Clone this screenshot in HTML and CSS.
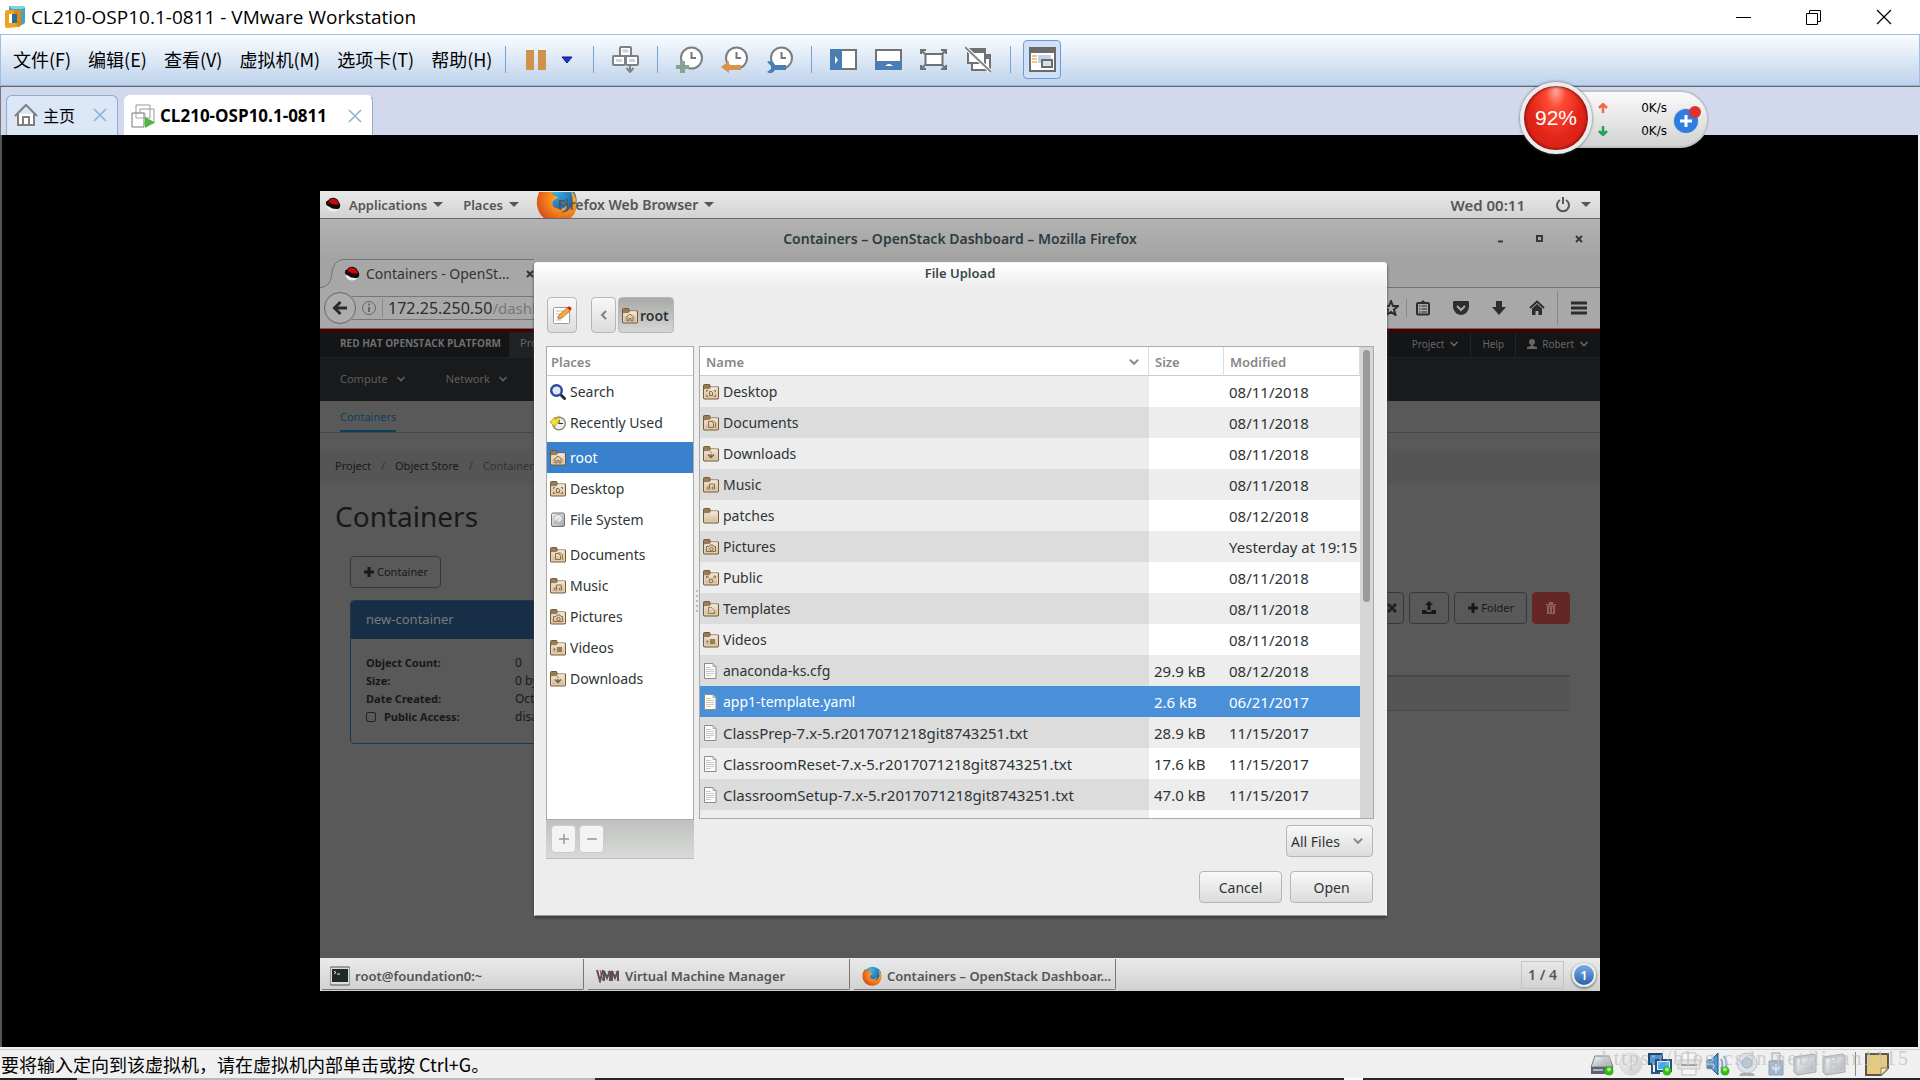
FILE: index.html
```html
<!DOCTYPE html>
<html lang="zh-CN">
<head>
<meta charset="utf-8">
<title>CL210-OSP10.1-0811 - VMware Workstation</title>
<link rel="stylesheet" href="styles.css">
</head>
<body>
<svg class="sprite" aria-hidden="true">
  <defs>
    <linearGradient id="gFold" x1="0" y1="0" x2="0" y2="1"><stop offset="0" stop-color="#f3e9dc"/><stop offset="1" stop-color="#d3b992"/></linearGradient>
    <linearGradient id="gSilver" x1="0" y1="0" x2="1" y2="1"><stop offset="0" stop-color="#f4f5f7"/><stop offset="1" stop-color="#9aa3ad"/></linearGradient>
    <radialGradient id="gFire" cx=".7" cy=".3" r=".9"><stop offset="0" stop-color="#ffce3a"/><stop offset=".5" stop-color="#f4801c"/><stop offset="1" stop-color="#c8321a"/></radialGradient>
    <radialGradient id="gGlobe" cx=".4" cy=".2" r=".9"><stop offset="0" stop-color="#3fb8ea"/><stop offset="1" stop-color="#123e82"/></radialGradient>
  </defs>
  <symbol id="folder" viewBox="0 0 16 16"><path d="M.5 14V1.500q0-1 1-1H6q1 0 1 1V3h8.500v11q0 1-1 1h-13q-1 0-1-1z" fill="#9a7b58" stroke="#745a35"/><path d="M1.500 14V5.500h5l1.500-2h6.500V14z" fill="url(#gFold)" stroke="#faf4ea" stroke-width=".6"/></symbol>
  <symbol id="f-home" viewBox="0 0 16 16"><use href="#folder"/><path d="M3.500 10 8 6l4.500 4M5 9.500V13h2v-2.500h2V13h2V9.500" fill="none" stroke="#8d6d45"/></symbol>
  <symbol id="f-desk" viewBox="0 0 16 16"><use href="#folder"/><path d="M3.500 8V6.500H5M3.500 11v1.500H5M11 6.500h1.500V8M12.500 11v1.500H11M6.500 7.500h2l1 1v3h-3z" fill="none" stroke="#8d6d45"/></symbol>
  <symbol id="f-docs" viewBox="0 0 16 16"><use href="#folder"/><path d="M5.500 6.500h3l2 2v4h-5zM8 6h2.500l2 2v4.500" fill="none" stroke="#8d6d45"/></symbol>
  <symbol id="f-down" viewBox="0 0 16 16"><use href="#folder"/><path d="M8 5.500v1M8 8v3M5 8.500l3 3 3-3" fill="none" stroke="#7d5c35" stroke-width="1.400"/></symbol>
  <symbol id="f-music" viewBox="0 0 16 16"><use href="#folder"/><path d="M6.500 11V7h5v4" fill="none" stroke="#8d6d45"/><circle cx="5.500" cy="11" r="1.300" fill="none" stroke="#8d6d45"/><circle cx="10.500" cy="11" r="1.300" fill="none" stroke="#8d6d45"/></symbol>
  <symbol id="f-pics" viewBox="0 0 16 16"><use href="#folder"/><path d="M3.500 7.500H6L7 6h3l1 1.500h1.500v5h-9z" fill="none" stroke="#8d6d45"/><circle cx="8.500" cy="10" r="1.700" fill="none" stroke="#8d6d45"/></symbol>
  <symbol id="f-pub" viewBox="0 0 16 16"><use href="#folder"/><path d="M3.500 8V6h2M3.500 6 6 8.500M10.500 6h2v2M12.500 6 10 8.500" fill="none" stroke="#8d6d45"/><circle cx="8" cy="11" r="1.800" fill="none" stroke="#8d6d45"/></symbol>
  <symbol id="f-tmpl" viewBox="0 0 16 16"><use href="#folder"/><path d="M5.500 6.500h3l3 3v3h-6z" fill="none" stroke="#7d5c35" stroke-dasharray="1.500 .7"/></symbol>
  <symbol id="f-vid" viewBox="0 0 16 16"><use href="#folder"/><path d="M7 7h5v5H7zM3.500 7.500 6 9.500l-2.500 2z" fill="#9a7c55"/></symbol>
  <symbol id="doc" viewBox="0 0 16 16"><path d="M1.500.5h8.500l3 3v12H1.500z" fill="#fcfcfb" stroke="#8b8d89"/><path d="M10 .5v3h3" fill="none" stroke="#a9aba7"/><path d="M3 4.500h5M3 6.500h8M3 8.500h8M3 10.500h8M3 12.500h5" stroke="#c9cac7"/></symbol>
  <symbol id="search" viewBox="0 0 16 16"><path d="m10.500 10.500 4 4" stroke="#2b2b33" stroke-width="3" stroke-linecap="round"/><circle cx="6.500" cy="6.500" r="5.300" fill="#dfe8f6" stroke="#2d469a" stroke-width="2.400"/></symbol>
  <symbol id="recent" viewBox="0 0 16 16"><circle cx="9" cy="8.500" r="6.300" fill="#efefec" stroke="#7d7f7b" stroke-width="1.300"/><path d="M9 5v3.500h4" fill="none" stroke="#333" stroke-width="1.200"/><path d="M0 7 5 2v2.500Q8 3 8.500.8 10.500 8 5 10v2z" fill="#f6dd45" stroke="#b99a10" stroke-width=".8"/></symbol>
  <symbol id="disk" viewBox="0 0 16 16"><rect x="1.500" y="1" width="13" height="13.500" rx="1.500" fill="url(#gSilver)" stroke="#71746f"/><ellipse cx="8" cy="6.500" rx="4.500" ry="4" fill="#e6e7e6" stroke="#b0b2af"/><path d="M4 11.500 8 7.500" stroke="#9b9d99"/></symbol>
  <symbol id="chev" viewBox="0 0 10 10"><path d="m1.500 3 3.500 3.500L8.500 3" fill="none" stroke="currentColor" stroke-width="1.600"/></symbol>
  <symbol id="tri" viewBox="0 0 10 10"><path d="M0 2h10L5 7z" fill="currentColor"/></symbol>
  <symbol id="hat" viewBox="0 0 16 16"><path d="M1.500 9q1 5 6 5.500 5 0 6.500-3.500l-7-2z" fill="#eee"/><path d="M1 7Q.5 4 3 3.500L5 1.500Q9-.5 12.500 2.500L15 7q1 4-2 5-6 .5-9-2.500Q2 9 1 7z" fill="#120808"/><path d="M3 6.500 4.500 3Q6.500.8 8.500 2q3-.3 4 1.700L14 8.500Q8 10.500 3 6.500z" fill="#c90b0b"/><path d="M3.500 6.500 4 5.300q4 3 9.500 2.300l.5 1.300Q8 10.500 3.500 6.500z" fill="#1a0505"/></symbol>
  <symbol id="fox" viewBox="0 0 16 16"><circle cx="8.500" cy="7.500" r="7" fill="url(#gGlobe)"/><path d="M2 2.500 4 4q1.500-1 3-.7L6 5l2.500 1L6.500 7.500Q5.500 10 9 10.500q2-.3 3-1.500 0 2-2.500 2.800Q13 12 14 8q0-3-1-5 3 3 2.500 7Q14 15.500 8 15.800 1 15 .3 8.500.3 5 2 2.500z" fill="url(#gFire)"/></symbol>
  <symbol id="clock" viewBox="0 0 27 27"><circle cx="15.500" cy="12" r="10.500" fill="#fff" stroke="#7b7f82" stroke-width="2"/><path d="M15.500 6v6H20" fill="none" stroke="#777" stroke-width="2"/></symbol>
  <symbol id="cross" viewBox="0 0 16 16"><path d="m2 2 12 12M14 2 2 14" fill="none" stroke="currentColor" stroke-width="1.600"/></symbol>
  <symbol id="plus" viewBox="0 0 12 12"><path d="M6 1v10M1 6h10" stroke="currentColor" stroke-width="3"/></symbol>
  <symbol id="led" viewBox="0 0 10 10"><circle cx="5" cy="5" r="4.500" fill="#36b81f"/><circle cx="5" cy="3.500" r="2" fill="#a5f36e"/></symbol>
  <symbol id="panelbox" viewBox="0 0 24 24"><path d="M1 5 21 2l2 2v16L4 23l-3-3z" fill="#b9bec3" stroke="#8e959b"/><path d="M4 7 21 5v13L4 20z" fill="url(#gSilver)"/></symbol>
</svg>

<header class="titlebar">
  <svg class="i24" viewBox="0 0 24 24"><path d="M6 1h14q2 0 2 2v15l-3 2H8q-2 0-2-2z" fill="#44a5bd"/><path d="M6 1h14q2 0 2 2l-4 1H9z" fill="#83d3df"/><path d="M4 5h12q2 0 2 2v13q0 2-2 2l-12 1q-2 0-2-2V7q0-2 2-2z" fill="#f0a21f"/><path d="M6 9h8v9H6z" fill="#fff"/><path d="M9 9h5v9h-5z" fill="#226f98"/><path d="M11 5h5q2 0 2 2v13l-4 2v-13h-3z" fill="#e0851b"/></svg>
  <span class="wintitle">CL210-OSP10.1-0811 - VMware Workstation</span>
  <div class="winbtns">
    <button aria-label="最小化"><svg class="i16" viewBox="0 0 16 16"><path d="M0 8.500h15" stroke="#000"/></svg></button>
    <button aria-label="还原"><svg class="i16" viewBox="0 0 16 16"><path d="M.5 4.500h11v11H.5zM3.500 4V1.500h11v11H12" fill="none" stroke="#000"/></svg></button>
    <button aria-label="关闭"><svg class="i16" viewBox="0 0 16 16"><path d="m1 1 14 14M15 1 1 15" stroke="#000" stroke-width="1.200"/></svg></button>
  </div>
</header>

<nav class="toolbar">
  <div class="menus"><button>文件(F)</button><button>编辑(E)</button><button>查看(V)</button><button>虚拟机(M)</button><button>选项卡(T)</button><button>帮助(H)</button></div>
  <span class="sep"></span>
  <div class="tools pausegrp">
    <button aria-label="暂停"><svg class="pause" viewBox="0 0 20 22"><path d="M0 1h8v20H0zM12 1h8v20h-8z" fill="#d0914a"/></svg></button>
    <button aria-label="电源选项"><svg class="i12" viewBox="0 0 12 12"><path d="M1 3h10L6 9z" fill="#1a35d8" stroke="#0b1a80"/></svg></button>
  </div>
  <span class="sep"></span>
  <div class="tools"><button aria-label="发送 Ctrl+Alt+Del"><svg class="i27" viewBox="0 0 27 27"><g fill="#fff" stroke="#808080" stroke-width="2"><rect x="8" y="1" width="11" height="9" rx="1"/><rect x="1" y="10" width="12" height="9" rx="1"/><rect x="14" y="10" width="12" height="9" rx="1"/></g><path d="M10.500 3.500h6v3h-6zM4 13h6v3H4zM17 13h6v3h-6z" fill="#c4d3e8"/><path d="M18 19v7m-3.500-4 3.500 4 3.500-4" fill="none" stroke="#808080" stroke-width="2"/></svg></button></div>
  <span class="sep"></span>
  <div class="tools">
    <button aria-label="拍摄快照"><svg class="i27" viewBox="0 0 27 27"><use href="#clock"/><path d="M4 15h5v4h4v4H9v4H4v-4H0v-4h4z" fill="#82a595"/></svg></button>
    <button aria-label="恢复快照"><svg class="i27" viewBox="0 0 27 27"><use href="#clock"/><path d="m0 21 8-6v4h12v5H8v3z" fill="#d9934b"/></svg></button>
    <button aria-label="管理快照"><svg class="i27" viewBox="0 0 27 27"><use href="#clock"/><path d="M1 16q5-3 8 3h11v5H9q-3 5-8 2l4-3v-3z" fill="#4a7db2"/></svg></button>
  </div>
  <span class="sep"></span>
  <div class="tools">
    <button aria-label="显示库"><svg class="i27" viewBox="0 0 27 27"><path d="M1 4h25v19H1z" fill="#fff" stroke="#707478" stroke-width="2"/><path d="M0 3h12v21H0z" fill="#4a7db2"/><path d="m5 10 3 4-3 4z" fill="#fff"/></svg></button>
    <button aria-label="显示缩略图"><svg class="i27" viewBox="0 0 27 27"><path d="M1 4h25v19H1z" fill="#fff" stroke="#707478" stroke-width="2"/><path d="M0 15h27v9H0z" fill="#4a7db2"/><path d="m10 20 3-2h2l3 2z" fill="#fff"/></svg></button>
    <button aria-label="全屏"><svg class="i27" viewBox="0 0 27 27"><path d="M5.500 8h17v11h-17z" fill="#fff" stroke="#6e7275" stroke-width="2"/><path d="M1 8V4h5M21 4h5v4M1 19v4h5M26 19v4h-5M1 4l4 4M26 4l-4 4M1 23l4-4M26 23l-4-4" fill="none" stroke="#6e7275" stroke-width="2"/></svg></button>
    <button aria-label="Unity"><svg class="i27" viewBox="0 0 27 27"><path d="M12 9h13v15H7v-8" fill="#fff" stroke="#6e7275" stroke-width="2"/><path d="M3 3h17v14H3z" fill="#fff" stroke="#6e7275" stroke-width="2"/><path d="M3 2h18v5H3zM20 8h6v5h-6z" fill="#6e7275"/><path d="m0 1 26 25" stroke="#fff" stroke-width="4"/><path d="m0 1 26 25" stroke="#85898c" stroke-width="2"/></svg></button>
  </div>
  <span class="sep"></span>
  <button class="active" aria-label="控制台视图"><svg class="i27" viewBox="0 0 27 27"><path d="M1 3h25v22H1z" fill="#fff" stroke="#6b6b6b" stroke-width="2"/><path d="M0 1h27v6H0z" fill="#6b6b6b"/><path d="M3 10h5M3 13h5M3 16h5" stroke="#ecc98b" stroke-width="2"/><path d="M9 9h13v8H9z" fill="#c4d3e8"/><path d="M13 14h10v7H13z" fill="#d6e0f0" stroke="#6b6b6b" stroke-width="2"/></svg></button>
</nav>

<div class="tabstrip">
  <div class="vmtab"><svg class="i24" viewBox="0 0 24 24"><path d="M4 11v11h16V11" fill="#fff" stroke="#808080" stroke-width="2"/><path d="M1 13 12 2l11 11" fill="none" stroke="#808080" stroke-width="2"/><path d="M9 22v-8h6v8" fill="none" stroke="#808080" stroke-width="2"/></svg><span class="tabname">主页</span><button aria-label="关闭主页"><svg class="i16" viewBox="0 0 16 16"><use href="#cross"/></svg></button></div>
  <div class="vmtab current"><svg class="i24" viewBox="0 0 24 24"><path d="M5 1h14v13H5zM9 5h14v14H9z" fill="#fff" stroke="#999"/><path d="M1 9h12v14H1z" fill="#fff" stroke="#777"/><path d="M5 9h9v5H5z" fill="none" stroke="#aaa"/><path d="m14 13 10 5.500L14 24z" fill="#4db83c"/></svg><span class="tabname">CL210-OSP10.1-0811</span><button aria-label="关闭选项卡"><svg class="i16" viewBox="0 0 16 16"><use href="#cross"/></svg></button></div>
</div>

<main class="stage">
 <div class="guest">
  <header class="panel">
    <svg class="i16" viewBox="0 0 16 16"><use href="#hat"/></svg>
    <button class="p-app">Applications <svg class="i10"><use href="#tri"/></svg></button>
    <button class="p-places">Places <svg class="i10"><use href="#tri"/></svg></button>
    <button class="p-ff"><svg class="bigfox" viewBox="0 0 16 10" preserveAspectRatio="xMinYMid slice"><use href="#fox" width="16" height="16" y="-4"/></svg><span>Firefox Web Browser</span> <svg class="i10"><use href="#tri"/></svg></button>
    <span class="clocktext">Wed 00:11</span>
    <button class="p-power" aria-label="Power"><svg class="i16" viewBox="0 0 16 16"><path d="M5 3a6 6 0 1 0 6 0M8 0v7" fill="none" stroke="currentColor" stroke-width="2"/></svg><svg class="i10"><use href="#tri"/></svg></button>
  </header>

  <section class="browser">
    <div class="ff-title"><span></span><b>Containers – OpenStack Dashboard – Mozilla Firefox</b>
      <div class="ff-ctl"><button aria-label="Minimize"><svg class="i8" viewBox="0 0 8 8"><path d="M1 6.500h5" stroke="currentColor" stroke-width="2"/></svg></button><button aria-label="Maximize"><svg class="i8" viewBox="0 0 8 8"><path d="M1 1h5v5H1z" fill="none" stroke="currentColor" stroke-width="2"/></svg></button><button aria-label="Close"><svg class="i8" viewBox="0 0 8 8"><path d="m1 1 6 6M7 1 1 7" stroke="currentColor" stroke-width="2"/></svg></button></div>
    </div>
    <div class="ff-tabs">
      <svg class="curve" viewBox="0 0 24 29"><path d="M0 29V28.500C9 28 11 22 12 14S17 .5 24 .5V29z" fill="#a7a7a7"/><path d="M0 28.500C9 28 11 22 12 14S17 .5 24 .5" fill="none" stroke="#737373"/></svg>
      <div class="ff-tab"><svg class="i16"><use href="#hat"/></svg><span>Containers - OpenSt...</span><svg class="i8" viewBox="0 0 8 8"><path d="m1 1 6 6M7 1 1 7" stroke="#333" stroke-width="2"/></svg></div>
    </div>
    <div class="ff-nav">
      <button class="back" aria-label="Back"><svg class="i16" viewBox="0 0 16 16"><path d="M15 8H3M8.500 2 2.500 8l6 6" fill="none" stroke="#2b2b2b" stroke-width="3"/></svg></button>
      <div class="url"><svg class="i16" viewBox="0 0 16 16"><circle cx="8" cy="8" r="6.500" fill="none" stroke="#666"/><path d="M8 3.500v2M8 7v5" stroke="#555" stroke-width="1.500"/></svg><span class="v"></span><span>172.25.250.50<i>/dashboard</i></span></div>
      <div class="ff-icons">
        <svg class="i16" viewBox="0 0 16 16"><path d="m8 1 2 5h5l-4 3.500 1.500 5.500L8 12l-4.500 3L5 9.500 1 6h5z" fill="none" stroke="currentColor" stroke-width="2"/></svg><span class="v"></span>
        <svg class="i16" viewBox="0 0 16 16"><path d="M5 3 8 0l3 3z" fill="currentColor"/><rect x="2" y="3" width="12" height="11.500" rx="1" fill="none" stroke="currentColor" stroke-width="2"/><path d="M4 6h1.500M6.500 6H12M4 9h1.500M6.500 9H12M4 12h1.500M6.500 12H12" stroke="currentColor" stroke-width="1.200"/></svg>
        <svg class="i16" viewBox="0 0 16 16"><path d="M1 1h14q1 0 1 1v5Q15 14 8 15 1 14 0 7V2q0-1 1-1z" fill="currentColor"/><path d="m4 6 4 4 4-4" fill="none" stroke="#a7a7a7" stroke-width="2"/></svg>
        <svg class="i16" viewBox="0 0 16 16"><path d="M5 1h6v6h4l-7 8-7-8h4z" fill="currentColor"/></svg>
        <svg class="i16" viewBox="0 0 16 16"><path d="m1 8 7-6.500L15 8" fill="none" stroke="currentColor" stroke-width="2"/><path d="m8 4 5 4.500V15H9.500v-4h-3v4H3V8.500z" fill="currentColor"/></svg><span class="v tall"></span>
        <svg class="i16" viewBox="0 0 16 16"><path d="M0 3h16M0 8h16M0 13h16" stroke="currentColor" stroke-width="3"/></svg>
      </div>
    </div>
    <div class="os-top"><b>RED HAT OPENSTACK PLATFORM</b><span class="proj">Project</span>
      <div class="os-user"><a href="#">Project <svg class="i10"><use href="#chev"/></svg></a><a href="#">Help</a><a href="#"><svg class="i10" viewBox="0 0 10 10"><circle cx="5" cy="3" r="3" fill="currentColor"/><path d="M4 5h2v2l4 1v2H0V8l4-1z" fill="currentColor"/></svg> Robert <svg class="i10"><use href="#chev"/></svg></a></div>
    </div>
    <div class="os-nav"><a href="#">Compute <svg class="i10"><use href="#chev"/></svg></a><a href="#">Network <svg class="i10"><use href="#chev"/></svg></a></div>
    <div class="os-sub"><a href="#">Containers</a></div>
    <div class="crumbs"><a href="#">Project</a><i>/</i><a href="#">Object Store</a><i>/</i><span>Containers</span></div>
    <h1>Containers</h1>
    <div class="os-main">
      <div class="os-left">
        <button class="os-btn"><svg class="i12"><use href="#plus"/></svg>Container</button>
        <article class="card"><h2>new-container</h2>
          <dl><dt>Object Count:</dt><dd>0</dd><dt>Size:</dt><dd>0 bytes</dd><dt>Date Created:</dt><dd>Oct 2018</dd><dt><label><input type="checkbox">Public Access:</label></dt><dd>disabled</dd></dl>
        </article>
      </div>
      <div class="os-right">
        <div class="acts">
          <button class="os-btn clear" aria-label="Clear filter"><svg class="i10" viewBox="0 0 10 10"><path d="m1 1 8 8M9 1 1 9" stroke="#222" stroke-width="3"/></svg></button>
          <button class="os-btn" aria-label="Upload"><svg class="i14" viewBox="0 0 14 14"><path d="M7 0l4 4H8.500v5h-3V4H3zM0 9h4l1 2h4l1-2h4v4H0z" fill="currentColor"/></svg></button>
          <button class="os-btn"><svg class="i12"><use href="#plus"/></svg>Folder</button>
          <button class="os-btn del" aria-label="Delete"><svg class="i12" viewBox="0 0 12 12"><path d="M1 2h10v1.500H1zM4 0h4v2H4zM2 4h8v8H2z" fill="#8b6261"/><path d="M4.500 5v6M7.500 5v6" stroke="#632725"/></svg></button>
        </div>
        <div class="thead"></div>
      </div>
    </div>

    <form class="dialog" role="dialog" aria-label="File Upload">
      <div class="dlg-title">File Upload</div>
      <div class="pathbar">
        <button type="button" class="gbtn edit" aria-label="Type a file name"><svg class="i20" viewBox="0 0 20 20"><rect x="1.500" y="2.500" width="16" height="16" rx="1" fill="#fff" stroke="#9a9a98"/><path d="M4 6h8M4 9h6M4 12h4M4 15h5" stroke="#bbb"/><path d="m6 14 1-4 9-8 3 3-9 8z" fill="#f2a93b" stroke="#a26a18" stroke-width=".7"/><path d="m15 3 1.500-1.500q2-.5 3 1.500v1l-1.500 1.500z" fill="#d8211c"/></svg></button>
        <button type="button" class="gbtn prev" aria-label="Back"><svg class="i10" viewBox="0 0 10 10"><path d="M7 1 3 5l4 4" fill="none" stroke="#808080" stroke-width="2"/></svg></button>
        <button type="button" class="gbtn cur"><svg class="i16"><use href="#f-home"/></svg>root</button>
      </div>
      <div class="panes">
        <div class="side">
          <div class="places">
            <div class="ph">Places</div>
            <ul>
              <li><svg class="i16"><use href="#search"/></svg>Search</li>
              <li><svg class="i16"><use href="#recent"/></svg>Recently Used</li>
              <li class="sel"><svg class="i16"><use href="#f-home"/></svg>root</li>
              <li><svg class="i16"><use href="#f-desk"/></svg>Desktop</li>
              <li><svg class="i16"><use href="#disk"/></svg>File System</li>
              <li class="grp"><svg class="i16"><use href="#f-docs"/></svg>Documents</li>
              <li><svg class="i16"><use href="#f-music"/></svg>Music</li>
              <li><svg class="i16"><use href="#f-pics"/></svg>Pictures</li>
              <li><svg class="i16"><use href="#f-vid"/></svg>Videos</li>
              <li><svg class="i16"><use href="#f-down"/></svg>Downloads</li>
            </ul>
          </div>
          <div class="sidebar-tools"><button type="button" aria-label="Add"><svg class="i10" viewBox="0 0 10 10"><path d="M5 0v10M0 5h10" stroke="#999" stroke-width="1.500"/></svg></button><button type="button" aria-label="Remove"><svg class="i10" viewBox="0 0 10 10"><path d="M0 5h10" stroke="#999" stroke-width="1.500"/></svg></button></div>
        </div>
        <div class="grip"><i></i><i></i><i></i><i></i><i></i></div>
        <div class="filepane">
          <div class="files">
            <div class="clip">
            <table>
              <colgroup><col><col class="c-size"><col class="c-mod"></colgroup>
              <thead><tr><th><div class="cell">Name<svg class="i12"><use href="#chev"/></svg></div></th><th>Size</th><th>Modified</th></tr></thead>
              <tbody>
              <tr><td><div class="cell"><svg class="i16"><use href="#f-desk"/></svg>Desktop</div></td><td></td><td>08/11/2018</td></tr>
              <tr><td><div class="cell"><svg class="i16"><use href="#f-docs"/></svg>Documents</div></td><td></td><td>08/11/2018</td></tr>
              <tr><td><div class="cell"><svg class="i16"><use href="#f-down"/></svg>Downloads</div></td><td></td><td>08/11/2018</td></tr>
              <tr><td><div class="cell"><svg class="i16"><use href="#f-music"/></svg>Music</div></td><td></td><td>08/11/2018</td></tr>
              <tr><td><div class="cell"><svg class="i16"><use href="#folder"/></svg>patches</div></td><td></td><td>08/12/2018</td></tr>
              <tr><td><div class="cell"><svg class="i16"><use href="#f-pics"/></svg>Pictures</div></td><td></td><td>Yesterday at 19:15</td></tr>
              <tr><td><div class="cell"><svg class="i16"><use href="#f-pub"/></svg>Public</div></td><td></td><td>08/11/2018</td></tr>
              <tr><td><div class="cell"><svg class="i16"><use href="#f-tmpl"/></svg>Templates</div></td><td></td><td>08/11/2018</td></tr>
              <tr><td><div class="cell"><svg class="i16"><use href="#f-vid"/></svg>Videos</div></td><td></td><td>08/11/2018</td></tr>
              <tr><td><div class="cell"><svg class="i16"><use href="#doc"/></svg>anaconda-ks.cfg</div></td><td>29.9 kB</td><td>08/12/2018</td></tr>
              <tr class="sel"><td><div class="cell"><svg class="i16"><use href="#doc"/></svg>app1-template.yaml</div></td><td>2.6 kB</td><td>06/21/2017</td></tr>
              <tr><td><div class="cell long"><svg class="i16"><use href="#doc"/></svg>ClassPrep-7.x-5.r2017071218git8743251.txt</div></td><td>28.9 kB</td><td>11/15/2017</td></tr>
              <tr><td><div class="cell long"><svg class="i16"><use href="#doc"/></svg>ClassroomReset-7.x-5.r2017071218git8743251.txt</div></td><td>17.6 kB</td><td>11/15/2017</td></tr>
              <tr><td><div class="cell long"><svg class="i16"><use href="#doc"/></svg>ClassroomSetup-7.x-5.r2017071218git8743251.txt</div></td><td>47.0 kB</td><td>11/15/2017</td></tr>
              <tr><td><div class="cell"><svg class="i16"><use href="#doc"/></svg></div></td><td></td><td></td></tr>
              </tbody>
            </table>
            </div>
            <div class="scroll"><div class="thumb"></div></div>
          </div>
          <div class="filter"><select class="gbtn" aria-label="File type"><option>All Files</option></select><svg class="i12"><use href="#chev"/></svg></div>
        </div>
      </div>
      <div class="dlg-actions"><button type="button" class="gbtn">Cancel</button><button type="button" class="gbtn">Open</button></div>
    </form>
  </section>

  <footer class="taskbar">
    <button><svg class="i20" viewBox="0 0 20 20"><rect x="0" y="1" width="20" height="18" rx="1" fill="#ddd" stroke="#555"/><rect x="2" y="3" width="16" height="13" fill="#20282a"/><path d="m4 5 2 1.500L4 8M7 8h3" fill="none" stroke="#eee"/></svg>root@foundation0:~</button>
    <button><svg class="vmm" viewBox="0 0 24 14"><path d="m1 1 3 11L7 1M8 12V2l3 7 3-7v10M16 12V2l3 7 3-7v10" fill="none" stroke="#555" stroke-width="2"/><path d="m4 1 3 11M12 2l3 10M20 2l3 10" stroke="#a04048"/></svg>Virtual Machine Manager</button>
    <button><svg class="i20"><use href="#fox"/></svg>Containers – OpenStack Dashboar...</button>
    <span class="ws">1 / 4</span><span class="badge">1</span>
  </footer>
 </div>
</main>

<footer class="status">
  <span>要将输入定向到该虚拟机，请在虚拟机内部单击或按 Ctrl+G。</span>
  <div class="tray">
    <svg class="i24" viewBox="0 0 24 24"><path d="M5 4h14l4 11H1z" fill="url(#gSilver)" stroke="#777e86"/><path d="M1 15h22v7H1z" fill="#59646f"/><path d="M3 18h10" stroke="#aeb7c0" stroke-width="2"/><use href="#led" x="14" y="14" width="10" height="10"/></svg>
    <svg class="i24 off" viewBox="0 0 24 24"><circle cx="12" cy="12" r="11" fill="url(#gSilver)" stroke="#aaa"/><circle cx="12" cy="12" r="3" fill="#fff" stroke="#aaa"/></svg>
    <svg class="i24" viewBox="0 0 24 24"><path d="M1 2h13v10H1z" fill="#4e94cf" stroke="#20466c" stroke-width="2"/><path d="M8 8h15v11H8z" fill="#48a8f5" stroke="#24527e" stroke-width="2"/><path d="M9.500 9.500h12v8h-12z" fill="none" stroke="#e5edf5"/><path d="M4 13v8h8" fill="none" stroke="#2b5a87" stroke-width="2"/><use href="#led" x="14" y="14" width="10" height="10"/></svg>
    <svg class="i24 off" viewBox="0 0 24 24"><path d="M5 1h14v8H5zM5 16h14v7H5z" fill="#fff" stroke="#777"/><rect x="1" y="8" width="22" height="9" rx="1" fill="#d5d7d9" stroke="#888"/><path d="M4 13h16" stroke="#333" stroke-width="2"/></svg>
    <svg class="i24" viewBox="0 0 24 24"><path d="M1 8h4l7-7v22l-7-7H1z" fill="#5195cf" stroke="#20507e"/><path d="M15 7q3 5 0 10M18 4q5 8 0 16" fill="none" stroke="#7da9cf" stroke-width="2"/><use href="#led" x="14" y="14" width="10" height="10"/></svg>
    <svg class="i24 dim" viewBox="0 0 24 24"><circle cx="12" cy="11" r="10" fill="#d5dfe9" stroke="#a3afbb"/><circle cx="12" cy="11" r="5" fill="#a9bed3" stroke="#8299b0"/><path d="M6 21h12l2 3H4z" fill="#999"/></svg>
    <svg class="i24 dim" viewBox="0 0 24 24"><path d="M8 1h8v8H8z" fill="#e6e9ed" stroke="#888"/><path d="M5 9h14v14H5z" fill="#8aa3c0" stroke="#6c88a6"/><path d="M12 12v9M9 14v3h6v-3" fill="none" stroke="#fff"/></svg>
    <svg class="i24 dim"><use href="#panelbox"/></svg>
    <svg class="i24 dim"><use href="#panelbox"/></svg>
    <span class="v"></span>
    <svg class="i24" viewBox="0 0 24 24"><path d="M1 2h22v14l-7 7H1z" fill="#e6c97e" stroke="#5e5647" stroke-width="2"/><path d="M16 23v-7h7" fill="#f6e7bd" stroke="#8b7a4e"/></svg>
  </div>
  <span class="mark">https://blog.csdn.net/ligan1115</span>
</footer>

<aside class="meter">
  <div class="pill">
    <div class="rates"><div><svg class="i10" viewBox="0 0 10 10"><path d="M5 10V2M1 5l4-4 4 4" fill="none" stroke="#ee6a4c" stroke-width="2.500"/></svg>0K/s</div><div><svg class="i10" viewBox="0 0 10 10"><path d="M5 0v8M1 5l4 4 4-4" fill="none" stroke="#1fa35a" stroke-width="2.500"/></svg>0K/s</div></div>
    <svg class="boost" viewBox="0 0 30 30"><circle cx="14" cy="16" r="13" fill="#d9d9d9"/><circle cx="14" cy="16" r="12" fill="#2f7de0"/><path d="M14 10v12M8 16h12" stroke="#fff" stroke-width="3"/><circle cx="23" cy="7" r="6" fill="#dc3230"/></svg>
  </div>
  <div class="ball">92%</div>
</aside>
</body>
</html>
```
FILE: styles.css
```css
* { box-sizing: border-box; }
body { margin: 0; min-height: 100vh; display: flex; flex-direction: column; position: relative; background: #fff; color: #000; font-family: "Open Sans", "Noto Sans CJK SC", sans-serif; font-size: 18px; }
button, select, input { font: inherit; color: inherit; margin: 0; }
button { padding: 0; border: 0; background: none; display: flex; align-items: center; justify-content: center; white-space: nowrap; }
a { color: inherit; text-decoration: none; }
svg { display: block; flex: none; }
.sprite { position: absolute; width: 0; height: 0; }
.i8 { width: 8px; height: 8px; } .i10 { width: 10px; height: 10px; } .i12 { width: 12px; height: 12px; } .i14 { width: 14px; height: 14px; }
.i16 { width: 16px; height: 16px; } .i20 { width: 20px; height: 20px; } .i24 { width: 24px; height: 24px; } .i27 { width: 27px; height: 27px; }

/* Host window */
.titlebar { height: 34px; display: flex; align-items: center; padding: 0 28px 0 3px; gap: 4px; }
.wintitle { flex: 1; white-space: nowrap; font-size: 19px; }
.winbtns { display: flex; gap: 54px; }
.toolbar { height: 52px; display: flex; align-items: center; border: 1px solid #9dbfe3; border-bottom: 0; background: linear-gradient(#fafcff, #bdd2eb); padding: 0 14px 2px 12px; box-shadow: inset 0 -1px #8fb2d9; }
.menus { display: flex; gap: 17px; padding-bottom: 2px; font-family: "Noto Sans CJK SC", sans-serif; }
.sep { width: 1px; height: 27px; background: #7ba2d0; margin: 0 18px; }
.menus + .sep { margin: 0 20px 0 13px; }
.pausegrp + .sep { margin-left: 20px; }
.tools { display: flex; gap: 18px; }
.pausegrp { gap: 15px; align-items: center; }
.pause { width: 20px; height: 22px; }
.toolbar .active { width: 38px; height: 39px; margin-left: -6px; border: 1px solid #6f9bd0; border-radius: 4px; background: #cfe0f9; }
.tabstrip { height: 49px; display: flex; align-items: flex-end; gap: 6px; padding: 0 5px; background: #d3d9ed; border-top: 1px solid #6b6b6b; border-left: 1px solid #777; }
.vmtab { height: 40px; display: flex; align-items: center; padding: 0 9px 1px 7px; background: #dbe6f6; border: 1px solid #8faccb; border-bottom: 0; border-radius: 6px 6px 0 0; color: #8db4d3; }
.tabname { color: #000; font-size: 16px; margin: 0 17px 0 5px; }
.vmtab.current { background: #fff; border-color: #fff #8faccb #fff #fff; padding: 0 9px 0 6px; }
.current .tabname { font-weight: 700; font-size: 17px; margin-right: 20px; }
.stage { flex: 1; background: #000; border-left: 2px solid #555; border-right: 2px solid #eee; display: flex; align-items: center; justify-content: center; }
.status { height: 33px; display: flex; align-items: center; justify-content: space-between; padding: 0 31px 0 1px; border-top: 2px solid #fff; box-shadow: inset 0 1px #ccc; background: #f0f0f0; position: relative; font-family: "Noto Sans CJK SC", sans-serif; border-bottom: 2px solid #28282c; border-image: linear-gradient(90deg, #222 4%, #bbb 4% 31%, #28282c 31% 70%, #fff 70% 71%, #28282c 71%) 0 0 2 0; }
.tray { display: flex; align-items: center; gap: 5px; }
.tray .v { width: 1px; height: 24px; background: #888; margin: 0 4px; }
.off { opacity: .4; } .dim { opacity: .75; }
.mark { position: absolute; right: 10px; top: -2px; font: 20px "Liberation Serif", serif; letter-spacing: 2px; color: #c4c4c4; opacity: .8; white-space: nowrap; }

/* Network meter floating above the window */
.meter { position: absolute; top: 82px; right: 211px; width: 189px; height: 72px; }
.pill { position: absolute; inset: 8px 0 6px 36px; display: flex; align-items: center; justify-content: flex-end; gap: 5px; padding: 1px 5px 0 0; border-radius: 0 29px 29px 0; background: linear-gradient(#fafafa, #d3d3d3); border: 2px solid #c0c3cb; }
.rates { display: grid; gap: 7px; font: 12px/16px "DejaVu Sans", sans-serif; }
.rates div { display: flex; align-items: center; justify-content: space-between; width: 69px; }
.boost { width: 30px; height: 30px; }
.ball { position: absolute; left: 0; top: 0; width: 72px; height: 72px; border-radius: 50%; border: 4px solid #ececec; box-shadow: 0 0 3px #555, inset 0 0 3px 1px #711; background: radial-gradient(ellipse at 50% 5%, #ffb0a0 0, #ff4a34 22%, #e02418 60%, #d41c14); display: grid; place-items: center; color: #fff; font: 21px "Liberation Sans", sans-serif; }

/* Guest desktop */
.guest { width: 1280px; max-width: 100%; min-height: 800px; display: flex; flex-direction: column; font: 14px/18px "Noto Sans", sans-serif; color: #2e3436; overflow: hidden; }
.panel { height: 28px; display: flex; align-items: center; padding: 0 9px 0 5px; background: linear-gradient(#e9e9e9, #d2d2d2); border-bottom: 1px solid #666; color: #555; font-weight: 600; font-size: 13px; }
.panel button { gap: 6px; }
.p-app { margin-left: 8px; } .p-places { margin-left: 20px; } .p-ff { margin-left: 17px; position: relative; padding-left: 22px; }
.p-ff .bigfox { position: absolute; left: 0; top: -4px; width: 42px; height: 26px; }
.p-ff span { position: relative; font-size: 14px; }
.clocktext { margin-left: auto; margin-right: 30px; font-size: 15px; }
.panel .p-power { gap: 10px; }
.browser { flex: 1; display: flex; flex-direction: column; position: relative; background: #595959; color: #181818; font-size: 12px; }
.ff-title { height: 40px; display: grid; grid-template-columns: 1fr auto 1fr; align-items: center; background: linear-gradient(#b2b2b2, #a3a3a3); font-size: 14px; color: #2e3c40; }
.ff-title b { font-weight: 600; }
.ff-ctl { display: flex; justify-content: flex-end; gap: 31px; padding-right: 17px; }
.ff-tabs { height: 29px; display: flex; background: #a3a3a3; border-bottom: 1px solid #737373; }
.curve { width: 24px; height: 29px; }
.ff-tab { height: 29px; display: flex; align-items: center; gap: 6px; border-top: 1px solid #737373; background: #a7a7a7; font-size: 14px; color: #333; }
.ff-tab .i8 { margin-left: 11px; }
.ff-nav { height: 41px; display: flex; align-items: center; justify-content: space-between; padding: 0 13px 0 4px; background: #a8a8a8; border-bottom: 1px solid #666; color: #2d2d2d; }
.ff-nav .v { width: 1px; height: 18px; background: #888; }
.back { width: 32px; height: 32px; border: 1px solid #666; border-radius: 50%; background: #adadad; position: relative; flex: none; }
.url { flex: 1; height: 24px; margin-left: -4px; display: flex; align-items: center; gap: 5px; padding-left: 9px; border: 1px solid #777; border-width: 1px 0; background: #a9a9a9; font-size: 16px; }
.url i { font-style: normal; color: #777; font-size: 15px; }
.ff-icons { display: flex; align-items: center; gap: 22px; }
.ff-icons .v { margin: 0 -14px 0 -15px; } .ff-icons .v.tall { height: 34px; margin: 0 -9px 0 -10px; }
.os-top { height: 29px; border-top: 3px solid #4b0000; background: #141517; display: flex; align-items: center; padding-left: 20px; color: #666; font-size: 11px; border-bottom: 1px solid #222; }
.os-top b { color: #6f6f6f; font-family: "Open Sans", sans-serif; font-size: 10px; padding-bottom: 3px; }
.proj { align-self: stretch; padding: 2px 11px; margin-left: 8px; background: #1f2122; width: 120px; }
.os-user { margin-left: auto; display: flex; align-self: stretch; font-size: 10px; }
.os-user a { display: flex; align-items: center; gap: 5px; padding: 0 11px 1px; border-left: 1px solid #232425; }
.os-user a:first-child { padding-left: 26px; }
.os-nav { height: 43px; background: #191a1c; display: flex; align-items: center; gap: 40px; padding: 0 0 1px 20px; color: #5e5e5e; font-size: 11px; }
.os-nav a { display: flex; align-items: center; gap: 8px; }
.os-sub { height: 32px; padding-left: 20px; border-bottom: 1px solid #474747; display: flex; color: #0c3f58; }
.os-sub a { border-bottom: 2px solid #0c3f58; padding-top: 7px; font-size: 11px; }
.crumbs { height: 35px; margin-top: 16px; background: #555; border-radius: 4px; display: flex; align-items: center; gap: 10px; padding: 0 0 1px 15px; font-size: 11px; }
.crumbs i, .crumbs span { color: #333; font-style: normal; }
.browser h1 { margin: 12px 0 0 15px; font-weight: 400; font-size: 28px; line-height: 40px; }
.os-main { display: grid; grid-template-columns: 1fr 1fr; padding: 20px 30px 0; }
.os-left { width: 265px; }
.os-btn { height: 32px; padding: 0 12px; gap: 2px; border: 1px solid #383838; border-radius: 4px; font-size: 11px; }
.card { margin-top: 12px; height: 144px; border: 1px solid #1a3852; border-radius: 4px; overflow: hidden; }
.card h2 { margin: 0; height: 38px; line-height: 36px; padding-left: 15px; background: #182e46; color: #7a7a7a; font-size: 13px; font-weight: 400; }
.card dl { margin: 0; padding: 15px 0 0 15px; display: grid; grid-template-columns: 149px 1fr; line-height: 18px; }
.card dt { font-weight: 700; white-space: nowrap; font-size: 11px; } .card dd { margin: 0; }
.card label { display: flex; align-items: center; gap: 8px; }
.card input { appearance: none; width: 10px; height: 10px; border: 1px solid #222; border-radius: 2px; }
.os-right { padding-top: 36px; }
.acts { display: flex; justify-content: flex-end; gap: 5px; }
.clear { padding: 0 6px; } .os-btn.del { background: #632725; border-color: #632725; }
.thead { height: 36px; margin-top: 51px; border-top: 2px solid #484848; border-bottom: 1px solid #484848; background: #555; }

/* File chooser dialog */
.dialog { position: absolute; top: 43px; left: 214px; right: 213px; background: #ededed; border-radius: 3px 3px 0 0; border: 1px solid #f6f6f6; border-bottom-color: #999; padding: 0 12px 12px 11px; color: #2e3436; font-size: 14px; box-shadow: 0 2px 3px #3a3a3a; background-image: linear-gradient(#fff, #ededed 24px); }
.dlg-title { height: 34px; line-height: 20px; text-align: center; font-weight: 600; font-size: 13px; color: #3a464c; }
.pathbar { display: flex; gap: 2px; height: 49px; align-items: flex-start; padding-left: 1px; }
.gbtn { height: 36px; border: 1px solid #b6b6b3; border-radius: 4px; background: linear-gradient(#f8f8f8, #dcdcdc); }
.edit { width: 30px; margin-right: 12px; } .prev { width: 25px; }
.cur { padding: 1px 4px 0 3px; gap: 2px; font-weight: 600; background: linear-gradient(#a7aaa5, #d6d6d4); }
.panes { display: flex; }
.side { width: 148px; }
.places { height: 474px; background: #fff; border: 1px solid #aaaba9; }
.ph, th { height: 29px; font-weight: 600; color: #888; font-size: 13px; border-bottom: 1px solid #ccc; background: #fff; }
.ph { line-height: 31px; padding-left: 4px; }
.places ul { margin: 0; padding: 0; list-style: none; }
.places li { height: 31px; display: flex; align-items: center; gap: 4px; padding-left: 3px; }
.places .sel { background: #3981cc; color: #fff; margin-top: 4px; }
.places .grp { margin-top: 4px; }
.sidebar-tools { height: 39px; padding: 5px; display: flex; gap: 3px; background: linear-gradient(#bfc1bf, #d8dad7); border-bottom: 1px solid #bbb; }
.sidebar-tools button { width: 25px; height: 28px; border: 1px solid #ccc; border-radius: 4px; background: #f3f3f2; }
.grip { width: 5px; display: flex; flex-direction: column; align-items: center; gap: 3px; padding-top: 244px; }
.grip i { width: 2px; height: 2px; background: #bbb; }
.filepane { flex: 1; min-width: 0; }
.files { height: 473px; display: flex; border: 1px solid #aaaba9; overflow: hidden; }
.clip { flex: 1; overflow: hidden; }
table { width: 100%; border-collapse: separate; border-spacing: 0; table-layout: fixed; }
.c-size { width: 75px; } .c-mod { width: 136px; }
th, td { padding: 0; text-align: left; white-space: nowrap; }
th { padding: 1px 0 0 6px; border-right: 1px solid #ddd; }
th .cell { justify-content: space-between; padding-right: 8px; }
td { height: 31px; padding-left: 5px; background: #fff; font-size: 15px; }
td:first-child { padding-left: 3px; background: #ededed; font-size: 14px; }
.cell { display: flex; align-items: center; gap: 4px; }
.long { font-size: 15px; }
tbody tr:nth-child(even) td { background: #ededed; }
tbody tr:nth-child(even) td:first-child { background: #dcdcdc; }
tbody tr.sel td, tbody tr.sel td:first-child { background: #4a90d9; color: #fff; }
.scroll { width: 13px; background: #d6d6d6; padding: 3px; }
.thumb { width: 7px; height: 252px; border-radius: 4px; background: #9a9b9d; }
.filter { display: flex; justify-content: flex-end; align-items: center; padding: 6px 1px 0 0; }
.filter select { appearance: none; width: 87px; height: 32px; padding: 1px 4px 0; }
.filter svg { margin-left: -21px; margin-right: 9px; color: #888; pointer-events: none; }
.dlg-actions { display: flex; justify-content: flex-end; gap: 8px; margin-top: 12px; padding-right: 1px; }
.dlg-actions .gbtn { width: 83px; height: 32px; padding-top: 1px; }

/* Guest taskbar */
.taskbar { height: 33px; display: flex; align-items: center; gap: 4px; padding: 0 4px 0 2px; background: linear-gradient(#ebebeb, #d0d0d0); color: #555; font-size: 13px; font-weight: 600; }
.taskbar button { width: 262px; height: 31px; justify-content: flex-start; gap: 5px; padding: 3px 0 0 8px; border: solid #777; border-width: 0 1px 1px 0; border-radius: 0 0 2px 0; overflow: hidden; }
.vmm { width: 24px; height: 14px; }
.ws { margin-left: auto; border: 1px solid #c4c4c4; padding: 4px 6px; font-size: 14px; }
.badge { width: 24px; height: 24px; margin-left: 4px; display: grid; place-items: center; border: 2px solid #eee; border-radius: 50%; background: linear-gradient(#79aee6, #2c62ad); color: #fff; box-shadow: 0 1px 3px #555; }
```
